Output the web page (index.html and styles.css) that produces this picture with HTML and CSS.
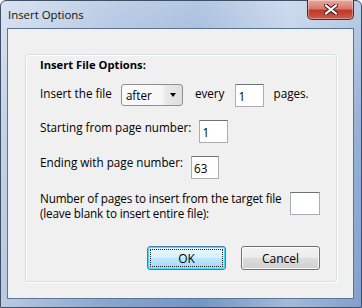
FILE: index.html
```html
<!DOCTYPE html>
<html lang="en">
<head>
    <meta charset="UTF-8">
    <meta name="viewport" content="width=device-width, initial-scale=1.0">
    <title>Insert Options</title>
    <link rel="stylesheet" href="styles.css">
</head>
<body>
    <div class="window">
        <!-- Title bar -->
        <div class="titlebar">
            <span class="title">Insert Options</span>
            <button class="close-btn" aria-label="Close">
                <svg width="14" height="11" viewBox="0 0 14 11">
                    <path d="M2 1.5 L12 9.5 M12 1.5 L2 9.5" stroke="#3a1010" stroke-width="4" stroke-linecap="square" />
                    <path d="M2 1.5 L12 9.5 M12 1.5 L2 9.5" stroke="#ffffff" stroke-width="2.2" stroke-linecap="square" />
                </svg>
            </button>
        </div>

        <!-- Dialog body -->
        <div class="client">
            <div class="group">
                <div class="group-title">Insert File Options:</div>

                <div class="row row-insert">
                    <span class="label">Insert the file</span>
                    <div class="combo">
                        <span class="combo-value">after</span>
                        <span class="combo-arrow"></span>
                    </div>
                    <span class="label every">every</span>
                    <input type="text" class="num" value="1">
                    <span class="label pages">pages.</span>
                </div>

                <div class="row row-start">
                    <span>Starting from page number:</span>
                    <input type="text" class="num" value="1">
                </div>

                <div class="row row-end">
                    <span>Ending with page number:</span>
                    <input type="text" class="num" value="63">
                </div>

                <div class="row row-count">
                    <span class="nowrap">Number of pages to insert from the target file<br>(leave blank to insert entire file):</span>
                    <input type="text" class="num" value="">
                </div>

                <div class="buttons">
                    <button class="btn btn-default"><span>OK</span></button>
                    <button class="btn">Cancel</button>
                </div>
            </div>
        </div>
    </div>
</body>
</html>
```

FILE: styles.css
```css
* {
    margin: 0;
    padding: 0;
    box-sizing: border-box;
}

body {
    width: 362px;
    height: 308px;
    font-family: "Open Sans", "Noto Sans", sans-serif;
    font-size: 11.7px;
    color: #000;
    background: #fff;
    overflow: hidden;
}

/* Aero window frame */
.window {
    width: 362px;
    height: 308px;
    border: 1px solid #3e4f66;
    border-radius: 6px 6px 0 0;
    background:
        linear-gradient(90deg, rgba(255,255,255,0.5) 0%, rgba(255,255,255,0.15) 30%, rgba(255,255,255,0) 55%, rgba(255,255,255,0.35) 80%, rgba(255,255,255,0.1) 100%),
        linear-gradient(180deg, #b4c8e3 0%, #8aa8d1 40%, #7395c4 100%);
    display: flex;
    flex-direction: column;
}

.titlebar {
    height: 28px;
    display: flex;
    align-items: flex-start;
    justify-content: space-between;
    padding-left: 7px;
}

.title {
    margin-top: 6px;
    font-size: 11.4px;
    color: #111;
}

.close-btn {
    width: 47px;
    height: 20px;
    margin-right: 7px;
    margin-top: -1px;
    border: 1px solid #5b2620;
    border-top: none;
    border-radius: 0 0 5px 5px;
    background: linear-gradient(180deg, #e8a99f 0%, #d77a6c 45%, #c0392b 55%, #cf5a48 100%);
    box-shadow: inset 0 0 0 1px rgba(255,255,255,0.35);
    display: flex;
    align-items: center;
    justify-content: center;
}

.client {
    flex: 1;
    margin: 0 7px 8px 6px;
    border: 1px solid #5c7496;
    background: #f0f0f0;
    padding: 25px 16px 16px 17px;
}

/* Group box */
.group {
    height: 228px;
    border: 1px solid #d5dfe5;
    border-radius: 3px;
    box-shadow: inset 1px 1px 0 #fff, 1px 1px 0 #fff;
    padding: 2px 16px 0 14px;
    position: relative;
}

.group-title {
    font-weight: bold;
    font-size: 11.2px;
    line-height: 16px;
}

.row {
    display: flex;
    align-items: flex-start;
    line-height: 16px;
}

.nowrap {
    white-space: nowrap;
}

.row-insert {
    margin-top: 11px;
}

.row-insert .label {
    margin-top: 1px;
}

.row-start {
    margin-top: 12px;
}

.row-end {
    margin-top: 11px;
}

.row-count {
    margin-top: 12px;
    line-height: 15px;
    letter-spacing: -0.15px;
}

.num {
    width: 29px;
    height: 23px;
    border: 1px solid #abadb3;
    border-top-color: #6e7178;
    background: #fff;
    font-family: inherit;
    font-size: 11.7px;
    padding: 0 2px;
    line-height: 16px;
    outline: none;
}

.row-start .num {
    margin-left: 8px;
    margin-top: 1px;
}

.row-end .num {
    margin-left: 8px;
    margin-top: 2px;
    width: 28px;
}

.row-count .num {
    margin-left: auto;
    margin-top: 1px;
    width: 30px;
}

/* Drop-down list */
.combo {
    width: 62px;
    height: 22px;
    margin-left: 9px;
    border: 1px solid #8e8f8f;
    border-radius: 3px;
    background: linear-gradient(90deg, #fbfbfb 0%, #f7f7f7 65%, #e8e8e8 75%, #dedede 100%);
    display: flex;
    align-items: center;
    padding-left: 4px;
}

.combo-value {
    flex: 1;
}

.combo-arrow {
    width: 0;
    height: 0;
    margin-right: 6px;
    border-left: 3.5px solid transparent;
    border-right: 3.5px solid transparent;
    border-top: 4px solid #000;
}

.every {
    margin-left: 12px;
}

.row-insert .num {
    margin-left: 11px;
}

.pages {
    margin-left: 9px;
}

/* Buttons */
.buttons {
    position: absolute;
    right: 16px;
    bottom: 11px;
    display: flex;
    gap: 15px;
}

.btn {
    width: 79px;
    height: 24px;
    border: 1px solid #707070;
    border-radius: 3px;
    background: linear-gradient(180deg, #f2f2f2 0%, #ebebeb 50%, #dddddd 51%, #cfcfcf 100%);
    box-shadow: inset 0 0 0 1px #fcfcfc;
    font-family: inherit;
    font-size: 12px;
    color: #000;
}

.btn-default {
    border-color: #3c7fb1;
    background: linear-gradient(180deg, #eaf6fd 0%, #d9f0fc 50%, #bee6fd 51%, #a7d9f5 100%);
    box-shadow: inset 0 0 0 1px #48d8fb;
    padding: 2px;
}

.btn-default span {
    display: flex;
    align-items: center;
    justify-content: center;
    height: 100%;
    border: 1px dotted #222;
}
```
